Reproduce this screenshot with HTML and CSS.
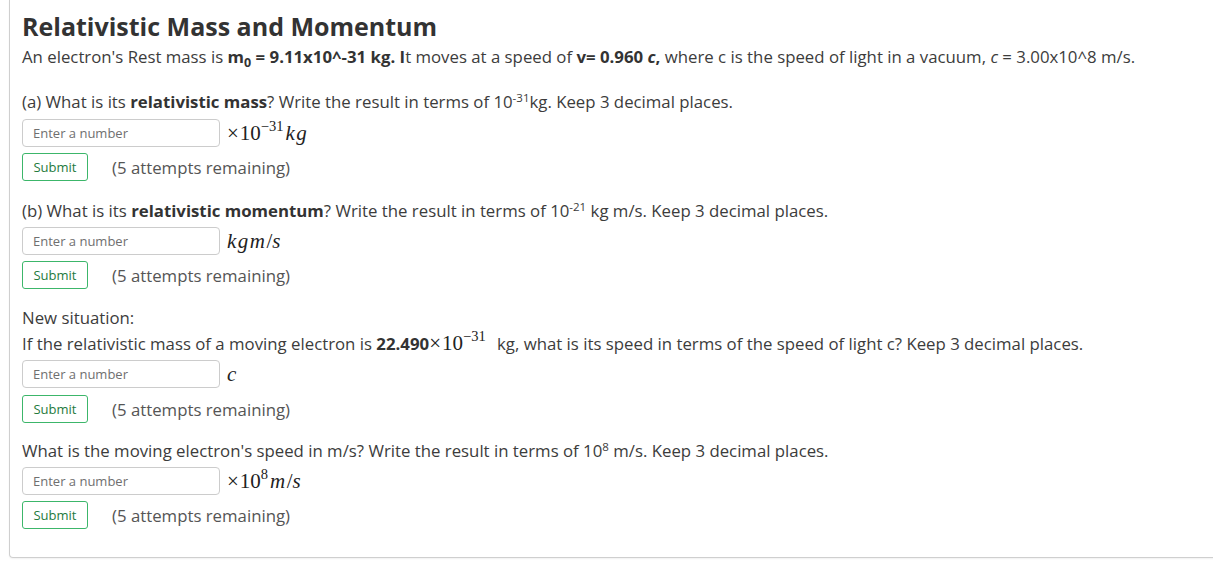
FILE: index.html
```html
<!DOCTYPE html>
<html>
<head>
<meta charset="utf-8">
<link rel="stylesheet" href="styles.css">
</head>
<body>
<div class="card">
  <h1 class="title">Relativistic Mass and Momentum</h1>
  <p class="intro">An electron's Rest mass is <b>m<sub>0</sub> = 9.11x10^-31 kg. I</b>t moves at a speed of <b>v= 0.960 <i>c</i>,</b> where c is the speed of light in a vacuum, <i>c</i> = 3.00x10^8 m/s.</p>

  <div class="part first">
    <p class="q">(a) What is its <b>relativistic mass</b>? Write the result in terms of 10<sup>-31</sup>kg. Keep 3 decimal places.</p>
    <div class="answer">
      <input class="num" type="text" placeholder="Enter a number">
      <span class="math"><span class="times">×</span>10<sup class="msup">−31</sup><i>kg</i></span>
    </div>
    <div class="submit-row">
      <button class="submit">Submit</button>
      <span class="attempts">(5 attempts remaining)</span>
    </div>
  </div>

  <div class="part">
    <p class="q">(b) What is its <b>relativistic momentum</b>? Write the result in terms of 10<sup>-21</sup> kg m/s. Keep 3 decimal places.</p>
    <div class="answer tight">
      <input class="num" type="text" placeholder="Enter a number">
      <span class="math"><i>kgm</i>/<i>s</i></span>
    </div>
    <div class="submit-row">
      <button class="submit">Submit</button>
      <span class="attempts">(5 attempts remaining)</span>
    </div>
  </div>

  <div class="part situation">
    <p class="q">New situation:</p>
    <p class="q q2">If the relativistic mass of a moving electron is <b>22.490</b><span class="math inline"><span class="times">×</span>10<sup class="msup">−31</sup></span> kg, what is its speed in terms of the speed of light c? Keep 3 decimal places.</p>
    <div class="answer tighter">
      <input class="num" type="text" placeholder="Enter a number">
      <span class="math"><i>c</i></span>
    </div>
    <div class="submit-row loose">
      <button class="submit">Submit</button>
      <span class="attempts">(5 attempts remaining)</span>
    </div>
  </div>

  <div class="part last">
    <p class="q">What is the moving electron's speed in m/s? Write the result in terms of 10<sup>8</sup> m/s. Keep 3 decimal places.</p>
    <div class="answer tight">
      <input class="num" type="text" placeholder="Enter a number">
      <span class="math"><span class="times">×</span>10<sup class="msup s8">8</sup><i>m</i>/<i>s</i></span>
    </div>
    <div class="submit-row">
      <button class="submit">Submit</button>
      <span class="attempts">(5 attempts remaining)</span>
    </div>
  </div>
</div>
</body>
</html>
```

FILE: styles.css
```css
html, body {
  margin: 0;
  padding: 0;
  background: #ffffff;
  overflow: hidden;
}
body {
  font-family: "Open Sans", "Liberation Sans", sans-serif;
  color: #333333;
  height: 561px;
}
.card {
  margin-left: 9px;
  width: 1230px;
  height: 558px;
  box-sizing: border-box;
  border: 1px solid #cfcfcf;
  border-top: none;
  border-radius: 0 0 4px 4px;
  padding: 8px 0 0 12px;
  box-shadow: 0 1px 2px rgba(0,0,0,0.06);
}
.title {
  margin: 0;
  font-size: 25px;
  font-weight: 700;
  line-height: 36px;
  color: #333;
}
.intro {
  margin: 0;
  font-size: 16.8px;
  line-height: 25px;
  color: #3c3c3c;
}
.intro b { color: #333; }
.intro sub {
  font-size: 12.5px;
  vertical-align: -4px;
  line-height: 0;
}
p { margin: 0; }
.q {
  font-size: 16.8px;
  line-height: 24px;
  color: #3c3c3c;
}
.q b { color: #333; }
.q sup {
  font-size: 11.5px;
  vertical-align: 6px;
  line-height: 0;
}
.q2 {
  line-height: 26px;
  margin-top: 1px;
}
.part { margin-top: 18px; }
.part.first { margin-top: 21px; }
.part.situation { margin-top: 17px; }
.part.last { margin-top: 16px; }
.answer {
  display: flex;
  align-items: center;
  margin-top: 5px;
  height: 28px;
}
.answer.tight { margin-top: 4px; }
.answer.tighter { margin-top: 3px; }
.num {
  width: 198px;
  height: 28px;
  box-sizing: border-box;
  border: 1px solid #cccccc;
  border-radius: 4px;
  padding: 0 10px;
  font-family: "Open Sans", "Liberation Sans", sans-serif;
  font-size: 13px;
  color: #333;
  margin: 0;
}
.num::placeholder { color: #6f6f6f; }
.math {
  font-family: "Liberation Serif", "DejaVu Serif", serif;
  font-size: 21px;
  color: #222;
  margin-left: 7px;
  line-height: 1;
}
.math i {
  font-style: italic;
  letter-spacing: 1.5px;
}
.times { margin-right: 1px; }
.math.inline { margin-left: 0; margin-right: 5px; }
.math .msup,
.q .msup {
  font-size: 14.5px;
  vertical-align: 9px;
  line-height: 0;
  margin-right: 2px;
}
.submit-row {
  display: flex;
  align-items: center;
  margin-top: 6px;
  height: 28px;
}
.submit-row.loose { margin-top: 7px; }
.submit {
  height: 28px;
  width: 66px;
  box-sizing: border-box;
  border: 1px solid #3cb66a;
  border-radius: 3px;
  background: #fff;
  color: #1f7a3d;
  font-family: "Open Sans", "Liberation Sans", sans-serif;
  font-size: 13px;
  padding: 0;
}
.attempts {
  margin-left: 24px;
  font-size: 16.8px;
  color: #555;
}
```
